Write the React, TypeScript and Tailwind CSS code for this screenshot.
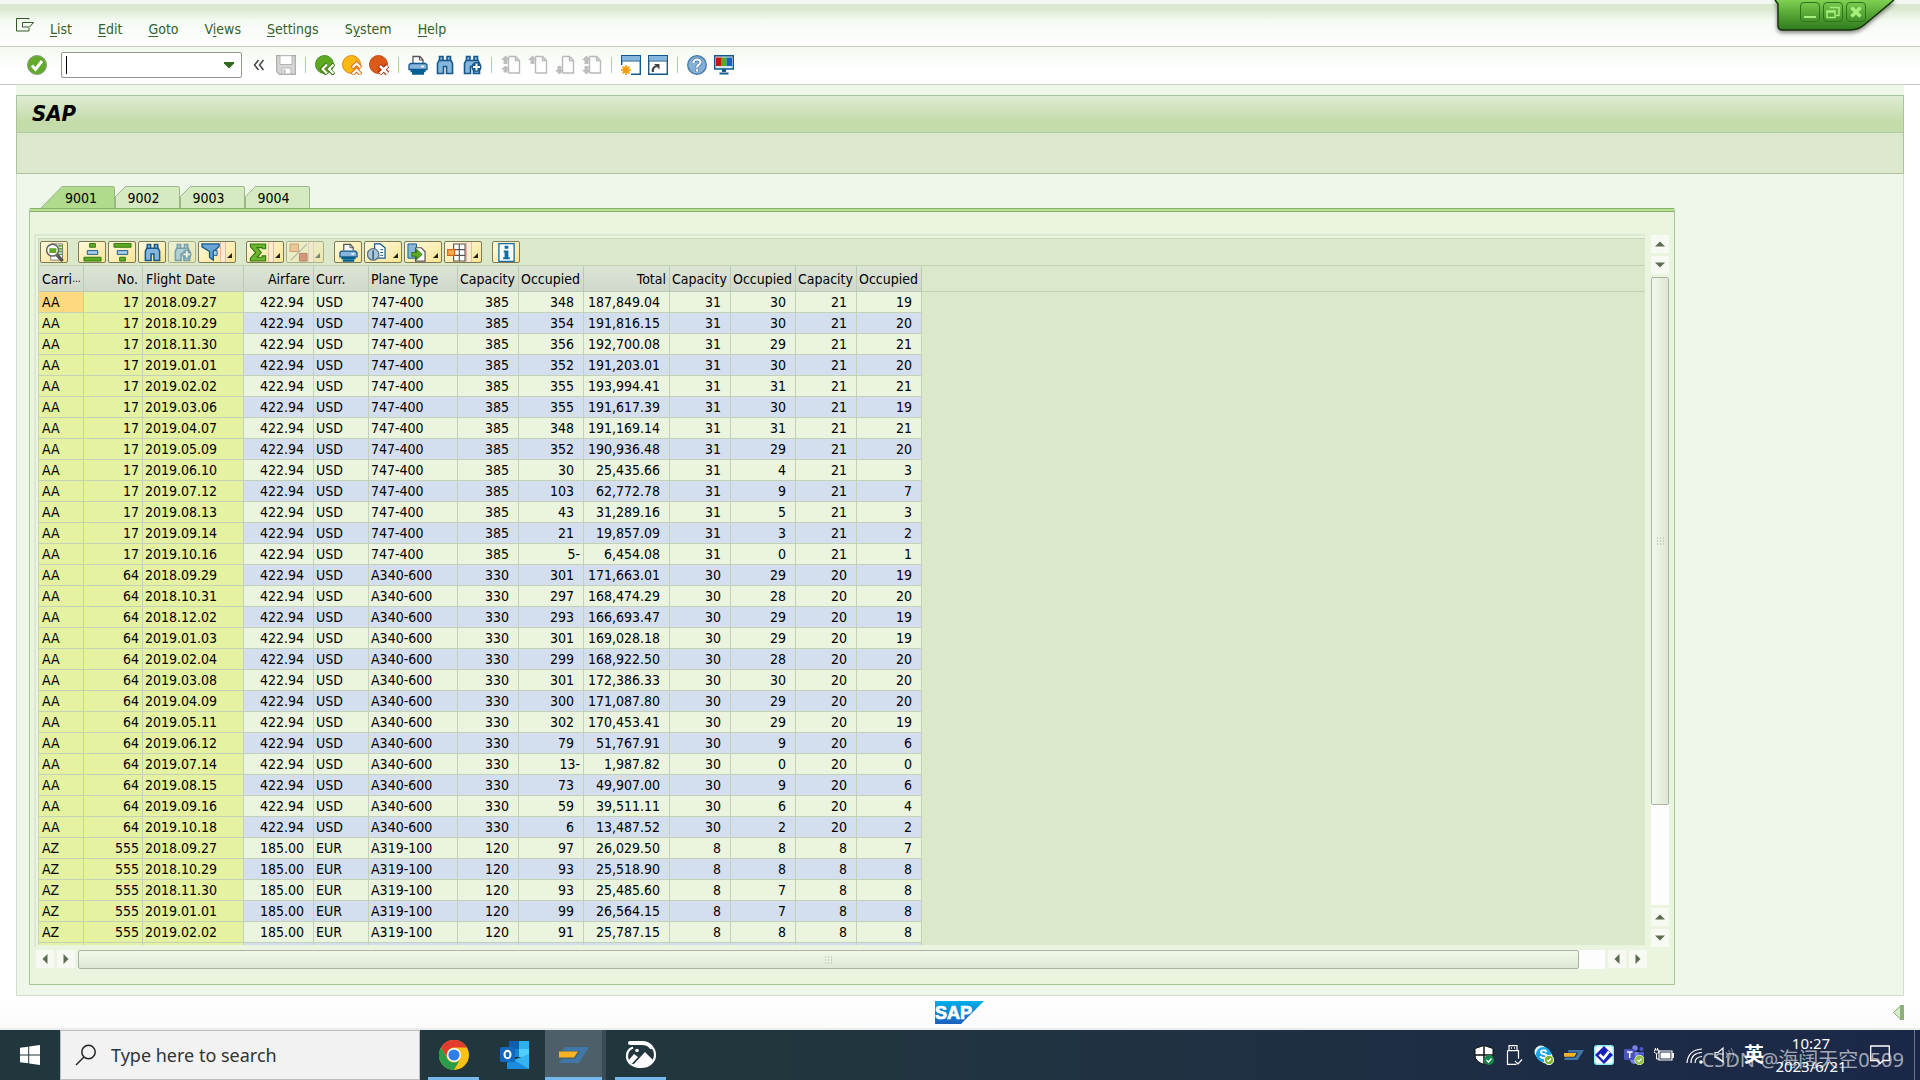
import { useState, type ReactNode } from 'react';

interface Column {
  label: string;
  width: string;
  numeric?: boolean;
  isKey?: boolean;
}

const COLUMNS: Column[] = [
  { label: 'Carri', width: 'w-[45px]', isKey: true },
  { label: 'No.', width: 'w-[59px]', numeric: true, isKey: true },
  { label: 'Flight Date', width: 'w-[101px]', isKey: true },
  { label: 'Airfare', width: 'w-[70px]', numeric: true },
  { label: 'Curr.', width: 'w-[55px]' },
  { label: 'Plane Type', width: 'w-[89px]' },
  { label: 'Capacity', width: 'w-[61px]', numeric: true },
  { label: 'Occupied', width: 'w-[65px]', numeric: true },
  { label: 'Total', width: 'w-[86px]', numeric: true },
  { label: 'Capacity', width: 'w-[61px]', numeric: true },
  { label: 'Occupied', width: 'w-[65px]', numeric: true },
  { label: 'Capacity', width: 'w-[61px]', numeric: true },
  { label: 'Occupied', width: 'w-[65px]', numeric: true },
];

// date, occupied, total, capacity/occupied business, capacity/occupied first
type Booking = [string, string, string, string, string, string, string];

const AA17: Booking[] = [
  ['2018.09.27', '348', '187,849.04', '31', '30', '21', '19'],
  ['2018.10.29', '354', '191,816.15', '31', '30', '21', '20'],
  ['2018.11.30', '356', '192,700.08', '31', '29', '21', '21'],
  ['2019.01.01', '352', '191,203.01', '31', '30', '21', '20'],
  ['2019.02.02', '355', '193,994.41', '31', '31', '21', '21'],
  ['2019.03.06', '355', '191,617.39', '31', '30', '21', '19'],
  ['2019.04.07', '348', '191,169.14', '31', '31', '21', '21'],
  ['2019.05.09', '352', '190,936.48', '31', '29', '21', '20'],
  ['2019.06.10', '30', '25,435.66', '31', '4', '21', '3'],
  ['2019.07.12', '103', '62,772.78', '31', '9', '21', '7'],
  ['2019.08.13', '43', '31,289.16', '31', '5', '21', '3'],
  ['2019.09.14', '21', '19,857.09', '31', '3', '21', '2'],
  ['2019.10.16', '5-', '6,454.08', '31', '0', '21', '1'],
];

const AA64: Booking[] = [
  ['2018.09.29', '301', '171,663.01', '30', '29', '20', '19'],
  ['2018.10.31', '297', '168,474.29', '30', '28', '20', '20'],
  ['2018.12.02', '293', '166,693.47', '30', '29', '20', '19'],
  ['2019.01.03', '301', '169,028.18', '30', '29', '20', '19'],
  ['2019.02.04', '299', '168,922.50', '30', '28', '20', '20'],
  ['2019.03.08', '301', '172,386.33', '30', '30', '20', '20'],
  ['2019.04.09', '300', '171,087.80', '30', '29', '20', '20'],
  ['2019.05.11', '302', '170,453.41', '30', '29', '20', '19'],
  ['2019.06.12', '79', '51,767.91', '30', '9', '20', '6'],
  ['2019.07.14', '13-', '1,987.82', '30', '0', '20', '0'],
  ['2019.08.15', '73', '49,907.00', '30', '9', '20', '6'],
  ['2019.09.16', '59', '39,511.11', '30', '6', '20', '4'],
  ['2019.10.18', '6', '13,487.52', '30', '2', '20', '2'],
];

const AZ555: Booking[] = [
  ['2018.09.27', '97', '26,029.50', '8', '8', '8', '7'],
  ['2018.10.29', '93', '25,518.90', '8', '8', '8', '8'],
  ['2018.11.30', '93', '25,485.60', '8', '7', '8', '8'],
  ['2019.01.01', '99', '26,564.15', '8', '7', '8', '8'],
  ['2019.02.02', '91', '25,787.15', '8', '8', '8', '8'],
];

function toRows(
  carrier: string,
  no: string,
  fare: string,
  currency: string,
  plane: string,
  capacity: string,
  bookings: Booking[]
): string[][] {
  return bookings.map(([date, ...rest]) => [carrier, no, date, fare, currency, plane, capacity, ...rest]);
}

const EMPTY_ROW = COLUMNS.map(() => '');

const ROWS: string[][] = [
  ...toRows('AA', '17', '422.94', 'USD', '747-400', '385', AA17),
  ...toRows('AA', '64', '422.94', 'USD', 'A340-600', '330', AA64),
  ...toRows('AZ', '555', '185.00', 'EUR', 'A319-100', '120', AZ555),
  EMPTY_ROW,
];

const MENUS = ['List', 'Edit', 'Goto', 'Views', 'Settings', 'System', 'Help'];
// index of the underlined access key in each menu label
const ACCESS_KEY: Record<string, number> = { Views: 1, System: 1 };

const TABS = ['9001', '9002', '9003', '9004'];

function Icon({ children, size = 'size-5' }: { children: ReactNode; size?: string }) {
  return (
    <svg viewBox="0 0 20 20" className={`${size} block shrink-0`} fill="none" aria-hidden="true">
      {children}
    </svg>
  );
}

function Binoculars() {
  return (
    <path
      d="M4.500 1.500h3.500v4h4v-4h3.500v3l2 4v10h-6v-7h-3v7h-6v-10l2-4zM4.500 5.500h3.500M12 5.500h3.500"
      fill="#86b6dc"
      stroke="#14588c"
      strokeWidth="1.6"
    />
  );
}

function Plus() {
  return (
    <>
      <circle cx="14.500" cy="12" r="5" fill="#14588c" />
      <path d="M14.500 8.500v7M11 12h7" stroke="#fff" strokeWidth="2" />
    </>
  );
}

function Printer() {
  return (
    <>
      <path d="M5 8V1.500h7L15 5v3" fill="#fff" stroke="#555" strokeWidth="1.300" />
      <path d="M11.500 1.500V5H15" stroke="#555" />
      <path d="M1 10l1.500-1.500h15L19 10v4.500H1z" fill="#86b6dc" stroke="#14588c" strokeWidth="1.300" />
      <path d="M13 11.500h3" stroke="#fff" strokeWidth="1.500" />
      <path d="M2.500 16h15M4 18.500h12" stroke="#005f92" strokeWidth="2.400" />
    </>
  );
}

function PageIcon({ up, down, double }: { up?: boolean; down?: boolean; double?: boolean }) {
  return (
    <Icon>
      <path d="M7.500 1.500h7l4 4v12.500h-11M7.500 18V1.500M14.500 1.500v4h4" fill="#fff" stroke="#b9b9b9" strokeWidth="1.400" />
      {up && <path d="M4.500 0.500l4.500 4.500H6.500v4h-4V5H0z" fill="#bdbdbd" />}
      {down && <path d="M4.500 19.500L0 15h2.500v-4h4v4H9z" fill="#bdbdbd" />}
      {double && <path d="M4.500 10.500L9 14.500H6.500v3h-4v-3H0z" fill="#bdbdbd" />}
    </Icon>
  );
}

function IconButton({ label, children }: { label: string; children: ReactNode }) {
  return (
    <button type="button" aria-label={label} className="shrink-0">
      {children}
    </button>
  );
}

function Separator() {
  return <span className="mx-0.5 h-4 w-px shrink-0 bg-[#a8d494]" />;
}

function MenuBar() {
  return (
    <nav className="flex h-[47px] shrink-0 items-center border-t-4 border-b border-t-[#f3f6f1] border-b-[#c6cdc2] bg-gradient-to-b from-[#d9e8cf] from-10% via-[#f5faf3] via-40% to-white pl-4">
      <button type="button" aria-label="Window menu" className="mr-4">
        <svg viewBox="0 0 18 14" className="h-3.5 w-[18px]" fill="none" aria-hidden="true">
          <path d="M13 1.500V.500H.500v12.500H13v-3" stroke="#2f5a22" />
          <path d="M6.500 4.500h11l-4 4.500h-7z" stroke="#2f5a22" />
        </svg>
      </button>
      <div className="flex gap-[26px] pt-2 text-sm text-[#34602a]">
        {MENUS.map((menu) => {
          const key = ACCESS_KEY[menu] ?? 0;
          return (
            <button key={menu} type="button">
              {menu.slice(0, key)}
              <u className="underline-offset-2">{menu[key]}</u>
              {menu.slice(key + 1)}
            </button>
          );
        })}
      </div>
    </nav>
  );
}

function WindowControls() {
  return (
    <div className="absolute top-0 right-5 h-9 w-[126px]">
      <svg viewBox="0 0 126 36" className="absolute inset-0 drop-shadow-[0_2px_2px_rgba(0,0,0,0.5)]" aria-hidden="true">
        <defs>
          <linearGradient id="controls" x1="0" y1="0" x2="0" y2="1">
            <stop offset="0" stopColor="#7fd152" />
            <stop offset="0.500" stopColor="#54a335" />
            <stop offset="1" stopColor="#2f7a1c" />
          </linearGradient>
        </defs>
        <path d="M1 0h119L90 25q-6 5-14 5H9q-5 0-5-4V4z" fill="url(#controls)" />
        <path d="M1 0l3 4v22q0 4 5 4h67q8 0 14-5l30-25" fill="none" stroke="#12330a" strokeWidth="1.500" />
      </svg>
      <div className="relative flex gap-[3px] pt-0.5 pl-[26px]">
        <button type="button" aria-label="Minimize" className="size-5 rounded-sm border border-[#2c751b]">
          <svg viewBox="0 0 18 18" aria-hidden="true">
            <path d="M3 14h12" stroke="#a6f07c" strokeWidth="2" />
          </svg>
        </button>
        <button type="button" aria-label="Restore" className="size-5 rounded-sm border border-[#2c751b]">
          <svg viewBox="0 0 18 18" fill="none" stroke="#a6f07c" aria-hidden="true">
            <path d="M6 4.500h9v8h-3" strokeWidth="1.500" />
            <path d="M3 8h8v6.500H3zM3 9h8" strokeWidth="1.500" />
          </svg>
        </button>
        <button type="button" aria-label="Close" className="size-5 rounded-sm border border-[#2c751b]">
          <svg viewBox="0 0 18 18" aria-hidden="true">
            <path d="M4.500 4.500l9 9M13.500 4.500l-9 9" stroke="#a6f07c" strokeWidth="3.500" />
          </svg>
        </button>
      </div>
    </div>
  );
}

function StandardToolbar() {
  const [command, setCommand] = useState('');

  return (
    <div className="flex h-[38px] shrink-0 items-center gap-[7px] border-b border-[#c6cdc2] bg-gradient-to-b from-[#f3f9f0] to-white to-60% pr-4 pb-0.5 pl-[27px]">
      <IconButton label="Enter">
        <Icon>
          <circle cx="10" cy="10" r="9.500" fill="#62ab2a" stroke="#8a9a80" />
          <path d="M5 10.500l3.500 4L15 6" stroke="#fff" strokeWidth="3" />
        </Icon>
      </IconButton>
      <div className="ml-[7px] flex h-[26px] w-[181px] items-center rounded-xs border border-[#8f988a] bg-white">
        <span className="ml-1 h-[18px] w-px bg-black" />
        <input
          aria-label="Command"
          value={command}
          onChange={(e) => setCommand(e.target.value)}
          className="min-w-0 flex-1 text-sm outline-none"
        />
        <button type="button" aria-label="Command history" className="mr-[7px]">
          <svg viewBox="0 0 10 6" className="h-1.5 w-2.5" aria-hidden="true">
            <path d="M0 0h10v1.500L5.500 6h-1L0 1.500z" fill="#2f6a1f" />
          </svg>
        </button>
      </div>
      <button type="button" aria-label="Collapse command field" className="mx-1">
        <svg viewBox="0 0 12 12" className="size-3" fill="none" aria-hidden="true">
          <path d="M5.500 1L1.500 6l4 5M10.500 1l-4 5 4 5" stroke="#444" strokeWidth="1.500" />
        </svg>
      </button>
      <IconButton label="Save">
        <Icon>
          <path d="M.700.700h18.600v18.600H3.500L.700 16.500z" fill="#d6d6d6" stroke="#a9a9a9" strokeWidth="1.200" />
          <path d="M4 .700h12v8.800H4z" fill="#fff" stroke="#b5b5b5" />
          <path d="M6 13h9v6H6z" fill="#fff" stroke="#b5b5b5" />
          <path d="M7.500 14.500h2v4h-2z" fill="#b5b5b5" />
        </Icon>
      </IconButton>
      <Separator />
      <IconButton label="Back">
        <Icon>
          <circle cx="9.500" cy="9.500" r="9" fill="#5fa821" stroke="#4c8b1c" />
          <path d="M12 9l-5 5 5 5.500M19 9l-5 5 5 5.500" stroke="#3c7a14" strokeWidth="4" />
          <path d="M12 9.500L7.500 14l4.500 4.500M18.500 9.500L14 14l4.500 4.500" stroke="#fff" strokeWidth="2.200" />
        </Icon>
      </IconButton>
      <IconButton label="Exit">
        <Icon>
          <circle cx="9.500" cy="9.500" r="9" fill="#fdb813" stroke="#e08a17" />
          <path d="M10 13l4.500-4.500L19 13M10 19.500l4.500-4.500 4.500 4.500" stroke="#e0701a" strokeWidth="4.200" />
          <path d="M10.500 12.500l4-4 4 4M10.500 19l4-4 4 4" stroke="#fff" strokeWidth="2" />
        </Icon>
      </IconButton>
      <IconButton label="Cancel">
        <Icon>
          <circle cx="9.500" cy="9.500" r="9" fill="#dc5a18" stroke="#c24a12" />
          <path d="M10.500 10.500l8 8M18.500 10.500l-8 8" stroke="#a8300c" strokeWidth="5" />
          <path d="M11 11l7.500 7.500M18.500 11L11 18.500" stroke="#fff" strokeWidth="2.600" />
        </Icon>
      </IconButton>
      <Separator />
      <IconButton label="Print">
        <Icon>
          <Printer />
        </Icon>
      </IconButton>
      <IconButton label="Find">
        <Icon>
          <Binoculars />
        </Icon>
      </IconButton>
      <IconButton label="Find next">
        <Icon>
          <Binoculars />
          <Plus />
        </Icon>
      </IconButton>
      <Separator />
      <IconButton label="First page">
        <PageIcon up double />
      </IconButton>
      <IconButton label="Previous page">
        <PageIcon up />
      </IconButton>
      <IconButton label="Next page">
        <PageIcon down />
      </IconButton>
      <IconButton label="Last page">
        <PageIcon up down />
      </IconButton>
      <Separator />
      <IconButton label="New session">
        <Icon>
          <path d="M.700.700h18.600v18.600H.700z" fill="#fff" stroke="#14588c" strokeWidth="1.400" />
          <path d="M1 1h18v4.500H1z" fill="#86b6dc" />
          <path d="M1 6h18" stroke="#14588c" />
          <path d="M0 10h10v10H0z" fill="#fff" />
          <circle cx="5" cy="15" r="3.500" fill="#fdb813" />
          <path d="M5 10v10M0 15h10M1.500 11.500l7 7M8.500 11.500l-7 7" stroke="#f39a12" strokeWidth="1.500" />
        </Icon>
      </IconButton>
      <IconButton label="Create shortcut">
        <Icon>
          <path d="M.700.700h18.600v18.600H.700z" fill="#fff" stroke="#14588c" strokeWidth="1.400" />
          <path d="M1 1h18v4.500H1z" fill="#86b6dc" />
          <path d="M1 6h18" stroke="#14588c" />
          <path d="M5 17q-1-5 4-6" stroke="#444" strokeWidth="2.200" />
          <path d="M6 9h5.500v5.500z" fill="#444" />
        </Icon>
      </IconButton>
      <Separator />
      <IconButton label="Help">
        <Icon>
          <circle cx="10" cy="10" r="9.300" fill="#86b0d8" stroke="#4278a6" strokeWidth="1.300" />
          <path d="M6.500 8q0-3.500 3.500-3.500t3.500 2.800q0 1.800-2 2.700-1.500.800-1.500 2.500M10 14.200v2.300" stroke="#356a9a" strokeWidth="3.400" />
          <path d="M6.500 8q0-3.500 3.500-3.500t3.500 2.800q0 1.800-2 2.700-1.500.800-1.500 2.500M10 14.200v2.300" stroke="#fff" strokeWidth="2.200" />
        </Icon>
      </IconButton>
      <IconButton label="Customize local layout">
        <Icon>
          <path d="M.700.700h18.600v13.300H.700z" fill="#d6e7f3" stroke="#14588c" strokeWidth="1.400" />
          <path d="M2 2.500h6v8.500H2z" fill="#c81414" />
          <path d="M7 2.500h5.500v8.500H7z" fill="#5ca820" />
          <path d="M12.500 2.500H18v8.500h-5.500z" fill="#1b62c0" />
          <path d="M8 14h4v3H8z" fill="#14588c" />
          <path d="M5.500 18.500h9" stroke="#14588c" strokeWidth="2" />
        </Icon>
      </IconButton>
    </div>
  );
}

function TabStrip({ active, onSelect }: { active: string; onSelect: (tab: string) => void }) {
  return (
    <div role="tablist" className="ml-3 flex h-[22px]">
      {TABS.map((tab, index) => (
        <button
          key={tab}
          role="tab"
          type="button"
          aria-selected={tab === active}
          onClick={() => onSelect(tab)}
          className={`relative pt-0.5 text-sm ${index === 0 ? 'w-[74px] pl-1.5' : 'w-[65px] pr-2'}`}
        >
          <svg
            viewBox={index === 0 ? '0 0 74 22' : '0 0 65 22'}
            preserveAspectRatio="none"
            className="absolute inset-0 size-full"
            aria-hidden="true"
          >
            <path
              d={index === 0 ? 'M0 22L21 .500h51q1.500 0 1.500 1.500v20' : 'M.500 22V10.500L10.500.500H63q1.500 0 1.500 1.500v20'}
              fill={tab === active ? '#b0da8c' : '#d5eac1'}
              stroke="#9ab78a"
            />
          </svg>
          <span className="relative">{tab}</span>
        </button>
      ))}
    </div>
  );
}

function AlvButton({
  label,
  menu,
  split,
  disabled,
  children,
}: {
  label: string;
  menu?: boolean;
  split?: boolean;
  disabled?: boolean;
  children: ReactNode;
}) {
  return (
    <button
      type="button"
      aria-label={label}
      disabled={disabled}
      className={`relative flex h-[22px] items-center rounded-xs border border-[#7d7a55] bg-gradient-to-br from-[#fdf9dc] to-[#fbe491] disabled:opacity-50 ${
        menu ? 'w-[38px] pl-0.5' : 'w-7 pl-1'
      }`}
    >
      <Icon size="size-[19px]">{children}</Icon>
      {split && <span className="h-full w-1.5 border-x border-[#eeb5b0] bg-[#fbeccb]" />}
      {menu && (
        <svg viewBox="0 0 6 6" className="absolute right-[3px] bottom-1 size-[5px]" aria-hidden="true">
          <path d="M6 0v6H0z" fill="#222" />
        </svg>
      )}
    </button>
  );
}

function AlvToolbar() {
  return (
    <div className="flex h-[27px] shrink-0 items-center gap-2.5 border-b border-[#c3d2b5] pl-px">
      <AlvButton label="Details">
        <path d="M6 1h12.500v17H6z" fill="#fff" stroke="#777" />
        <path d="M16 2v12" stroke="#62ab2a" strokeWidth="4" strokeDasharray="2 1" />
        <circle cx="8" cy="7.500" r="6.300" fill="#fff" stroke="#666" strokeWidth="1.600" />
        <path d="M4.500 5.500h7.500v5H4.500z" fill="#5fa821" />
        <path d="M12.500 12.500l6 6.500" stroke="#555" strokeWidth="3.500" />
      </AlvButton>
      <div className="flex gap-0.5">
        <AlvButton label="Sort in ascending order">
          <path d="M7 .500h6v4H7z" fill="#5fa821" stroke="#2f7a14" />
          <path d="M4.500 8h11v4h-11z" fill="#a9cde9" stroke="#14588c" />
          <path d="M1 15h18v4H1z" fill="#5fa821" stroke="#2f7a14" />
        </AlvButton>
        <AlvButton label="Sort in descending order">
          <path d="M1 .500h18v4H1z" fill="#5fa821" stroke="#2f7a14" />
          <path d="M4.500 8h11v4h-11z" fill="#a9cde9" stroke="#14588c" />
          <path d="M7 15h6v4H7z" fill="#5fa821" stroke="#2f7a14" />
        </AlvButton>
        <AlvButton label="Find">
          <Binoculars />
        </AlvButton>
        <AlvButton label="Find next" disabled>
          <Binoculars />
          <Plus />
        </AlvButton>
        <AlvButton label="Set filter" menu split>
          <path d="M1 1h18v3l-6 5v9l-4-3V9L1 4z" fill="#6aa5d6" stroke="#14588c" strokeWidth="1.400" />
          <path d="M13 8h4v5h-4z" fill="#a9cde9" stroke="#14588c" />
        </AlvButton>
      </div>
      <div className="flex gap-0.5">
        <AlvButton label="Total" menu split>
          <path
            d="M1.500 1h16v5h-3.500V4.800H8.500L13 10l-4.500 5H14v-1.500h3.500V19h-16v-3L7 10 1.500 4z"
            fill="#6db52c"
            stroke="#2f7a14"
            strokeWidth="1.200"
          />
        </AlvButton>
        <AlvButton label="Subtotals" menu split disabled>
          <path d="M1 1h9v8H1z" fill="#f5a96a" stroke="#c4551e" />
          <path d="M11 11h8v8h-8z" fill="#d0482e" stroke="#8e1f12" />
          <path d="M19 1L2 18" stroke="#888" strokeWidth="1.200" />
        </AlvButton>
      </div>
      <div className="flex gap-0.5">
        <AlvButton label="Print">
          <Printer />
        </AlvButton>
        <AlvButton label="Views" menu>
          <path d="M8 1h6l5 4v11H8z" fill="#fff" stroke="#14588c" strokeWidth="1.300" />
          <path d="M14 7h3M14 10h3M14 13h3" stroke="#14588c" />
          <circle cx="6.500" cy="12" r="6" fill="#a9c6dc" stroke="#5c7384" strokeWidth="1.400" />
          <path d="M6.500 8v9" stroke="#3b5d78" strokeWidth="1.600" />
        </AlvButton>
        <AlvButton label="Export" menu>
          <path d="M1 1h9v15H1z" fill="#86b6dc" stroke="#14588c" />
          <path d="M9 5h6l4 4v10H9z" fill="#fff" stroke="#555" strokeWidth="1.300" />
          <path d="M5 10h5V6.500l6 5.500-6 5.500V14H5z" fill="#5fa821" stroke="#2f7a14" />
        </AlvButton>
        <AlvButton label="Choose layout" menu split>
          <path d="M7 1h12v18H7zM7 7h12M7 13h12M13 1v18" fill="#fff" stroke="#555" strokeWidth="1.200" />
          <path d="M.700 7h7.300v6H.700z" fill="#fdb04a" stroke="#d4651a" strokeWidth="1.300" />
        </AlvButton>
      </div>
      <AlvButton label="Information">
        <path d="M2 .700h16v18.600H2z" fill="#fff" stroke="#0f6ea5" strokeWidth="1.400" />
        <path d="M8 3h4v3H8zM7 8h5v7h1.500v2h-7v-2H8v-5H7z" fill="#0f6ea5" />
      </AlvButton>
    </div>
  );
}

function cellClass(column: Column, rowIndex: number, columnIndex: number, value: string) {
  let align = column.numeric ? 'text-right' : 'pl-0.5 text-left';
  if (columnIndex === 0) align = 'pl-[3px] text-left';
  const inset = !column.numeric || column.isKey || value.endsWith('-') ? 'pr-[3px]' : 'pr-[9px]';
  let background = rowIndex % 2 === 0 ? 'bg-[#eaf4de]' : 'bg-[#d3dfef]';
  if (column.isKey) background = 'bg-[#e4f2a2]';
  if (rowIndex === 0 && columnIndex === 0) background = 'bg-[#ffd97f]';
  return `h-[21px] border-r border-b border-[#c4d1b9] whitespace-nowrap ${align} ${inset} ${background}`;
}

function headerClass(column: Column) {
  if (column.isKey) return column.numeric ? 'pr-1 text-right' : 'pl-[3px] text-left';
  return column.numeric ? 'pr-[3px] text-right' : 'pl-0.5 text-left';
}

function FlightTable() {
  return (
    <table className="w-full table-fixed border-separate border-spacing-0 text-sm leading-5">
      <colgroup>
        {COLUMNS.map((column, index) => (
          <col key={index} className={column.width} />
        ))}
        <col />
      </colgroup>
      <thead>
        <tr>
          {COLUMNS.map((column, index) => (
            <th
              key={index}
              scope="col"
              className={`h-[26px] border-r border-b border-[#bccab4] bg-gradient-to-b from-[#dde5d4] to-[#d0d8cc] pt-px font-normal whitespace-nowrap ${headerClass(column)}`}
            >
              {column.label}
              {index === 0 && <span className="align-bottom text-[10px]">...</span>}
            </th>
          ))}
          <td className="border-b border-[#c3d2b5]" />
        </tr>
      </thead>
      <tbody>
        {ROWS.map((row, rowIndex) => (
          <tr key={rowIndex}>
            {row.map((value, columnIndex) => (
              <td key={columnIndex} className={cellClass(COLUMNS[columnIndex], rowIndex, columnIndex, value)}>
                {value}
              </td>
            ))}
            <td />
          </tr>
        ))}
      </tbody>
    </table>
  );
}

const ARROWS = {
  up: 'M5 2.500L10 7.500H0z',
  down: 'M5 7.500L0 2.500h10z',
  left: 'M2.500 5L7.500 0v10z',
  right: 'M7.500 5L2.500 10V0z',
};

function ScrollButton({ direction }: { direction: keyof typeof ARROWS }) {
  return (
    <button
      type="button"
      aria-label={`Scroll ${direction}`}
      className="flex size-[18px] shrink-0 items-center justify-center bg-[#f6faf3]"
    >
      <svg viewBox="0 0 10 10" className="size-2.5" aria-hidden="true">
        <path d={ARROWS[direction]} fill="#5d6b50" />
      </svg>
    </button>
  );
}

function Grip() {
  return (
    <svg viewBox="0 0 9 8" className="h-2 w-[9px]" aria-hidden="true">
      <path d="M1 1h1M4 1h1M7 1h1M1 4h1M4 4h1M7 4h1M1 7h1M4 7h1M7 7h1" stroke="#a9b39f" />
    </svg>
  );
}

function VerticalScrollbar() {
  return (
    <div className="ml-1.5 flex w-[18px] shrink-0 flex-col gap-[3px] pt-px">
      <ScrollButton direction="up" />
      <ScrollButton direction="down" />
      <div className="flex min-h-0 flex-1 flex-col bg-[#fdfdfd]">
        <div className="flex h-[84%] items-center justify-center rounded-xs border border-[#abb2a4] bg-gradient-to-r from-[#f0f8e9] to-[#dfe8d6]">
          <Grip />
        </div>
      </div>
      <ScrollButton direction="up" />
      <ScrollButton direction="down" />
    </div>
  );
}

function HorizontalScrollbar() {
  return (
    <div className="mt-[3px] flex h-[19px] shrink-0 gap-[3px] pr-[22px] pl-0.5">
      <ScrollButton direction="left" />
      <ScrollButton direction="right" />
      <div className="flex flex-1 bg-[#fdfdfd] pr-[26px]">
        <div className="flex flex-1 items-center justify-center rounded-xs border border-[#abb2a4] bg-gradient-to-b from-[#f0f8e9] to-[#dfe8d6]">
          <Grip />
        </div>
      </div>
      <ScrollButton direction="left" />
      <ScrollButton direction="right" />
    </div>
  );
}

function SapMark() {
  return (
    <svg viewBox="0 0 24 12" className="h-2.5 w-5" aria-hidden="true">
      <path d="M5 0h19l-7.500 12H0l1.500-3h12l3.500-6H5z" fill="#3f78a8" />
      <path d="M0 3.500h15L12.500 8H0z" fill="#f6b221" />
    </svg>
  );
}

function StatusBar() {
  return (
    <footer className="relative flex h-[34px] shrink-0 items-center justify-center border-b-2 border-[#ededed] bg-gradient-to-b from-white to-[#fbfbfb] pr-0.5">
      <svg viewBox="0 0 49 23" className="h-[23px] w-[49px]" aria-label="SAP">
        <defs>
          <linearGradient id="sap" x1="0" y1="0" x2="0" y2="1">
            <stop offset="0" stopColor="#00aeea" />
            <stop offset="1" stopColor="#1b5fbd" />
          </linearGradient>
        </defs>
        <path d="M0 0h49L26 23H0z" fill="url(#sap)" />
        <text x="0" y="18" fill="#fff" stroke="#fff" strokeWidth="0.700" fontSize="18" fontWeight="700" fontFamily="Liberation Sans, sans-serif">
          SAP
        </text>
      </svg>
      <button type="button" aria-label="Show status fields" className="absolute right-4">
        <svg viewBox="0 0 11 15" className="h-[15px] w-[11px]" aria-hidden="true">
          <path d="M8 .500v14L.500 7.500z" fill="#d9efcb" stroke="#85a56c" />
          <path d="M7 0h4v15H7z" fill="#8fae7c" />
        </svg>
      </button>
    </footer>
  );
}

function TaskItem({
  label,
  active,
  running,
  children,
}: {
  label: string;
  active?: boolean;
  running?: boolean;
  children: ReactNode;
}) {
  return (
    <button
      type="button"
      aria-label={label}
      className={`relative flex h-full w-[61px] items-center justify-center ${
        active ? 'border-r-4 border-[#3a4d56] bg-[#4d6069]' : ''
      }`}
    >
      {children}
      {running && <span className={`absolute bottom-0 h-[3px] bg-[#76b9ed] ${active ? 'inset-x-0' : 'inset-x-[5px]'}`} />}
    </button>
  );
}

function Taskbar() {
  return (
    <div className="relative flex h-[50px] shrink-0 items-center bg-gradient-to-r from-[#22363e] via-[#22363e] via-40% to-[#1b2748] font-['Noto_Sans','Noto_Sans_CJK_SC',sans-serif] text-white">
      <button type="button" aria-label="Start" className="flex h-full w-[60px] items-center justify-center">
        <svg viewBox="0 0 20 20" className="size-5" fill="#fff" aria-hidden="true">
          <path d="M0 2.800L8.200 1.700v7.800H0zM9.200 1.500L20 0v9.500H9.200zM0 10.500h8.200v7.800L0 17.200zM9.200 10.500H20V20L9.200 18.500z" />
        </svg>
      </button>
      <label className="flex h-full w-[360px] items-center gap-3.5 border border-[#bcbcbc] bg-[#f2f2f2] pl-3.5 text-[#222]">
        <svg viewBox="0 0 22 22" className="size-[22px] shrink-0" fill="none" stroke="#222" strokeWidth="1.500" aria-hidden="true">
          <circle cx="13.500" cy="8" r="6.700" />
          <path d="M9 13L1 21" />
        </svg>
        <input
          aria-label="Search"
          placeholder="Type here to search"
          className="min-w-0 flex-1 text-lg outline-none placeholder:text-[#333]"
        />
      </label>
      <div className="ml-[3px] flex h-full">
        <TaskItem label="Chrome" running>
          <svg viewBox="0 0 30 30" className="size-[30px]" aria-hidden="true">
            <circle cx="15" cy="15" r="15" fill="#fbc116" />
            <path d="M2 7.500A15 15 0 0 1 28 7.500H15a7.500 7.500 0 0 0-6.500 11.200z" fill="#e33b2e" />
            <path d="M2 7.500l6.500 11.200a7.500 7.500 0 0 0 13 0L15 30A15 15 0 0 1 2 7.500z" fill="#2a9c4a" />
            <circle cx="15" cy="15" r="7" fill="#fff" />
            <circle cx="15" cy="15" r="5.600" fill="#2f7de9" />
          </svg>
        </TaskItem>
        <TaskItem label="Outlook">
          <svg viewBox="0 0 30 28" className="h-7 w-[30px]" aria-hidden="true">
            <path d="M9 0h20v16H9z" fill="#0f5faf" />
            <path d="M19 0h10v8H19z" fill="#2fb0ee" />
            <path d="M9 8h10v8H9z" fill="#1680d4" />
            <path d="M19 8h10v8H19z" fill="#50d0fa" />
            <path d="M7 13l11 7 11-7v15H7z" fill="#1b8be0" />
            <path d="M29 13v15L14 19z" fill="#36b4f2" />
            <rect y="6" width="15" height="15" rx="1.500" fill="#1168bf" />
            <ellipse cx="7.500" cy="13.500" rx="3" ry="3.700" fill="none" stroke="#fff" strokeWidth="2" />
          </svg>
        </TaskItem>
        <TaskItem label="SAP Logon" active running>
          <svg viewBox="0 0 30 16" className="h-4 w-[30px]" aria-hidden="true">
            <path d="M6 0h24L20 16H0l3-4h13l5-8H3z" fill="#3f78a8" />
            <path d="M0 4.500h19l-4 6H0z" fill="#f6b221" />
          </svg>
        </TaskItem>
        <div className="ml-1 h-full">
          <TaskItem label="Drawing app" running>
            <svg viewBox="0 0 32 30" className="h-[30px] w-8" fill="none" aria-hidden="true">
              <path
                d="M5 3h12c8 0 13 5.500 13 12s-6 12-14 12S2 23 2 16c0-4 2-7 6-8.500"
                stroke="#fff"
                strokeWidth="2.200"
              />
              <path d="M5 3h12q6 0 9 4" stroke="#fff" strokeWidth="4" strokeLinecap="round" />
              <path d="M3 21l6-7 4 3-6 6.500zM8 25L20 12l9 9q-4 6-13 6-5 0-8-2z" fill="#fff" />
              <circle cx="12" cy="10.500" r="1.800" fill="#fff" />
            </svg>
          </TaskItem>
        </div>
      </div>
      <div className="ml-auto flex h-full items-center">
        <div className="flex items-center gap-2.5">
          <Icon>
            <path d="M10 .500l9 3v7q0 6-9 9-9-3-9-9v-7z" fill="#fff" stroke="#111" />
            <path d="M10 1v18M1 10h18" stroke="#111" strokeWidth="1.500" />
            <circle cx="15" cy="15" r="5" fill="#15874b" />
            <path d="M12.500 15l2 2 3-3.500" stroke="#fff" strokeWidth="1.300" />
          </Icon>
          <Icon>
            <path d="M5 .700h8v5H5zM3.500 5.700h11v8M3.500 5.700v13.600h9M11 16l3 3 4-4.500" stroke="#fff" strokeWidth="1.200" />
            <path d="M7 3h1M10 3h1" stroke="#fff" strokeWidth="1.500" />
          </Icon>
          <Icon>
            <circle cx="7" cy="7" r="6.500" fill="#d8f2fd" />
            <circle cx="12" cy="12" r="6.500" fill="#d8f2fd" />
            <circle cx="9.500" cy="9.500" r="7.500" fill="#19a5e8" />
            <path
              d="M12.500 7q-1-2-3.500-1.700-2.500.200-2.200 2 .200 1.200 2.700 1.700 3 .500 3 2.200 0 1.800-2.800 1.800t-3.500-2"
              stroke="#fff"
              strokeWidth="1.800"
            />
            <circle cx="15" cy="15" r="4.700" fill="#7ab52c" stroke="#fff" />
            <path d="M13 15l1.500 1.500L17 13.500" stroke="#fff" strokeWidth="1.300" />
          </Icon>
          <SapMark />
          <Icon>
            <rect width="20" height="20" rx="3" fill="#8cecf4" />
            <rect x="1.500" y="1.500" width="17" height="17" rx="2" fill="#fff" />
            <path d="M10 1l9 9-9 9-9-9z" fill="#1420b8" />
            <path d="M5.500 9.500l4 4 5.500-7" stroke="#fff" strokeWidth="2.800" />
          </Icon>
          <Icon>
            <circle cx="11" cy="3" r="2.700" fill="#7b83eb" />
            <circle cx="17.500" cy="4" r="2" fill="#5059c9" />
            <path d="M6 7h10v8q-2 4-6 4-4-1-4-5z" fill="#7b83eb" />
            <path d="M14 7h6v7h-5z" fill="#5059c9" />
            <rect y="4" width="11" height="11" rx="1" fill="#4b53bc" />
            <path d="M3 7h5.500M5.700 7v6" stroke="#fff" strokeWidth="1.500" />
            <circle cx="15.500" cy="15" r="4.700" fill="#8cbd3c" stroke="#d6e8b8" />
            <path d="M13.500 15l1.500 1.500 2.500-3" stroke="#fff" strokeWidth="1.300" />
          </Icon>
          <Icon>
            <path d="M5 6h13v9H5zM18.500 8.500h1v4h-1z" stroke="#fff" strokeWidth="1.200" />
            <path d="M6.500 7.500h10v6h-10z" fill="#fff" />
            <path d="M0 5h5v2.500H4L2.500 9 1 7.500H0zM1.500 3v2M3.500 3v2M2.500 9v5H5" stroke="#fff" />
          </Icon>
          <Icon>
            <path d="M3 18Q4 5 18 4M7 18q0-10 11-10.500M11 18q0-6 7-6.500" stroke="#fff" strokeWidth="1.200" />
            <circle cx="17" cy="17" r="1.800" fill="#fff" />
          </Icon>
          <Icon>
            <path d="M1 7.500h3l5-4.500v14l-5-4.500H1z" stroke="#fff" strokeWidth="1.200" />
            <path d="M12 7q2 3 0 6M14.500 5q3.500 5 0 10M17 3q5 7 0 14" stroke="#7f8a9c" />
          </Icon>
          <span className="text-xl leading-5 font-bold">英</span>
        </div>
        <div className="flex w-[94px] flex-col items-center text-[15px] leading-[23px]">
          <span>10:27</span>
          <span>2023/6/21</span>
        </div>
        <button type="button" aria-label="Notifications" className="mr-6 ml-3">
          <Icon>
            <path d="M.700 1h18.600v14.500h-6L10 18.500l-3-3H.700z" stroke="#fff" strokeWidth="1.300" />
          </Icon>
        </button>
        <span className="mr-[5px] h-full w-px bg-[#6b7488]" />
      </div>
      <p className="pointer-events-none absolute right-4 bottom-1 text-xl leading-8 whitespace-nowrap text-white/60">
        CSDN @海阔天空0509
      </p>
    </div>
  );
}

export default function App() {
  const [tab, setTab] = useState('9001');

  return (
    <div className="relative flex h-screen flex-col overflow-hidden bg-white font-['DejaVu_Sans_Condensed','DejaVu_Sans',sans-serif] text-black">
      <MenuBar />
      <StandardToolbar />
      <WindowControls />

      <main className="mx-4 flex min-h-0 flex-1 flex-col bg-[#eff6ea]">
        <header className="mt-2.5 shrink-0 border border-[#abc39b]">
          <h1 className="h-[37px] border-b border-[#b3cba3] bg-gradient-to-b from-[#dfecd2] to-[#c4dbaa] to-70% pl-[15px] text-[22px] leading-9 font-bold italic">
            SAP
          </h1>
          <div className="h-10 bg-[#dde8cf]" />
        </header>
        <div className="flex min-h-0 flex-1 flex-col border-x border-b border-[#d3dfce] pt-3 pr-[228px] pb-2.5 pl-3">
          <TabStrip active={tab} onSelect={setTab} />
          <section className="flex min-h-0 flex-1 flex-col rounded-t-xs border border-[#a9c795] border-t-[#86b068] bg-[#eaf4de]">
            <div className="h-[3px] shrink-0 border-b border-[#86b068] bg-[#bbe09a]" />
            <div className="flex min-h-0 flex-1 flex-col pt-[22px] pr-[5px] pb-[15px] pl-1">
              <div className="flex min-h-0 flex-1">
                <div className="min-w-0 flex-1 border-t-2 border-l-2 border-[#dce9d0] pt-0.5 pb-0.5 pl-0.5">
                  <div className="flex h-full flex-col overflow-hidden border-t border-l border-[#c8d7ba] bg-[#dbe9ca]">
                    <AlvToolbar />
                    <div className="min-h-0 flex-1 overflow-hidden">
                      <FlightTable />
                    </div>
                  </div>
                </div>
                <VerticalScrollbar />
              </div>
              <HorizontalScrollbar />
            </div>
          </section>
        </div>
      </main>

      <StatusBar />
      <Taskbar />
    </div>
  );
}
